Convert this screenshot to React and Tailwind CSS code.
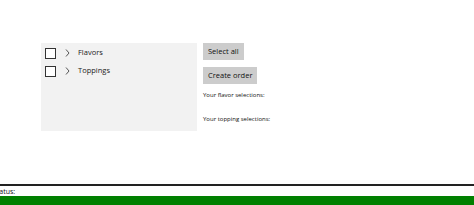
import React from "react";

function Row({ label }) {
  return (
    <div className="flex items-center h-[18px]">
      <span className="ml-[4px] w-[11px] h-[11px] border border-[#333] bg-white" />
      <svg className="ml-[9px]" width="5" height="8" viewBox="0 0 5 8">
        <path d="M1 0.5 L4 4 L1 7.5" fill="none" stroke="#444" strokeWidth="0.9" />
      </svg>
      <span className="ml-[8px] text-[7.5px] text-[#222]">{label}</span>
    </div>
  );
}

export default function App() {
  return (
    <div
      className="w-[474px] h-[205px] bg-white flex flex-col overflow-hidden"
      style={{ fontFamily: '"Open Sans", "Liberation Sans", sans-serif' }}
    >
      <div className="flex-1 flex pt-[43px] pl-[41px]">
        {/* tree */}
        <div className="w-[156px] h-[88px] bg-[#f2f2f2] pt-[1px]">
          <Row label="Flavors" />
          <Row label="Toppings" />
        </div>

        {/* actions */}
        <div className="ml-[6px] flex flex-col items-start">
          <button className="h-[17px] px-[5px] bg-[#cccccc] text-[7.5px] text-[#111] leading-none">
            Select all
          </button>
          <button className="mt-[7px] h-[17px] px-[5px] bg-[#cccccc] text-[7.5px] text-[#111] leading-none">
            Create order
          </button>
          <div className="mt-[7px] text-[6px] text-[#111] leading-[8px]">Your flavor selections:</div>
          <div className="mt-[16px] text-[6px] text-[#111] leading-[8px]">Your topping selections:</div>
        </div>
      </div>

      <div className="border-t-[2px] border-[#222] h-[12px] flex items-center">
        <span className="ml-[-7px] text-[7px] text-[#111] leading-none">Status:</span>
      </div>
      <div className="h-[9px] bg-[#008000]" />
    </div>
  );
}
